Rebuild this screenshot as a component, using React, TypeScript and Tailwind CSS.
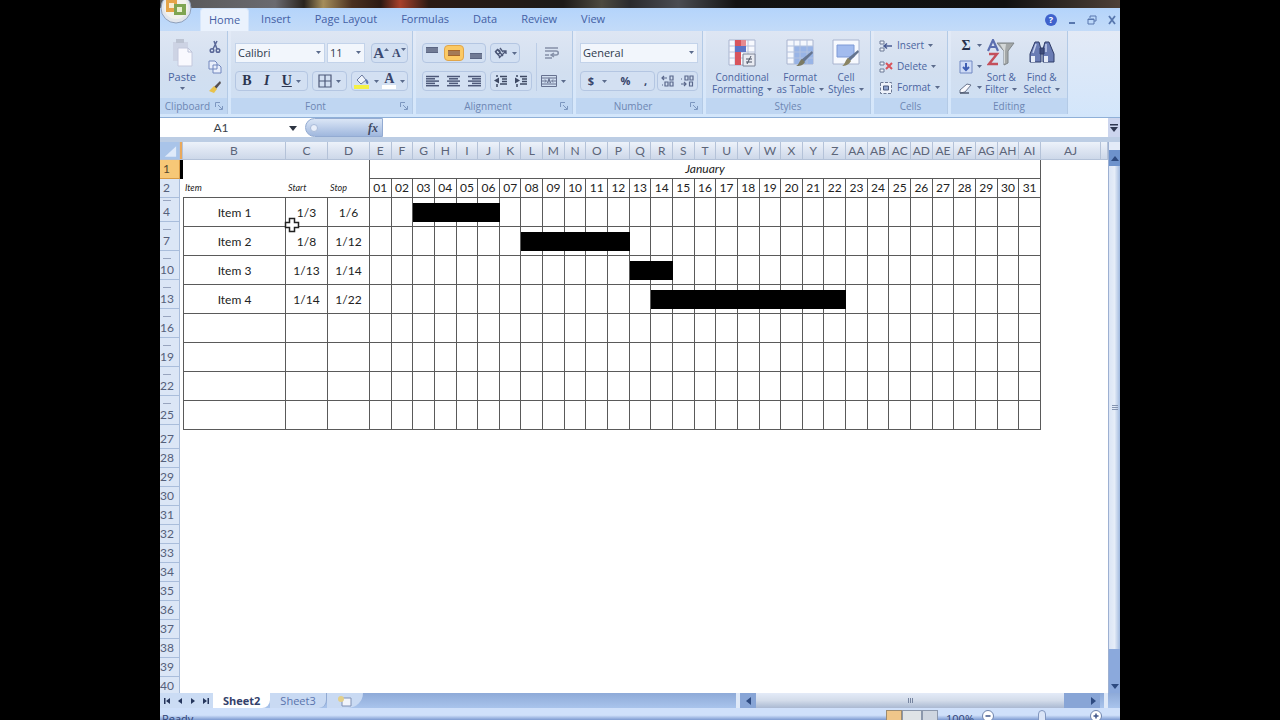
// Spreadsheet window with a ribbon and a January gantt sheet
import React from 'react';

interface Task {
    name: string;
    start: string;
    stop: string;
    from: number;
    to: number;
}

const TASKS: (Task | null)[] = [
    { name: 'Item 1', start: '1/3', stop: '1/6', from: 3, to: 6 },
    { name: 'Item 2', start: '1/8', stop: '1/12', from: 8, to: 12 },
    { name: 'Item 3', start: '1/13', stop: '1/14', from: 13, to: 14 },
    { name: 'Item 4', start: '1/14', stop: '1/22', from: 14, to: 22 },
    null,
    null,
    null,
    null,
];

const DAYS = Array.from({ length: 31 }, (_, i) => i + 1);
const EMPTY_ROWS = Array.from({ length: 14 }, (_, i) => i + 27);
const TABS = ['Insert', 'Page Layout', 'Formulas', 'Data', 'Review', 'View'];

// E..Z, AA..AI
const dayColumn = (day: number) => {
    const n = day + 3;
    return n < 26 ? String.fromCharCode(65 + n) : 'A' + String.fromCharCode(65 + n - 26);
};

const Caret = ({ className = '' }: { className?: string }) => (
    <svg viewBox="0 0 5 3" className={`w-[5px] h-[3px] shrink-0 ${className}`} aria-hidden="true">
        <path d="M0 0h5L2.5 3z" fill="#5b6b8c" />
    </svg>
);

interface GroupProps {
    title: string;
    className: string;
    launcher?: boolean;
    children: React.ReactNode;
}

const Group = ({ title, className, launcher, children }: GroupProps) => (
    <section className={`flex flex-col shrink-0 border-r border-[#b3cae6] bg-gradient-to-b from-[#dee6f3] via-[#d2dff0] to-[#cddff4] ${className}`}>
        <div className="flex-1 flex px-1 pt-3">{children}</div>
        <div className="h-4 flex items-center bg-[#bfd6f2] text-[#6d86b3]">
            <h2 className="flex-1 text-center">{title}</h2>
            {launcher && (
                <button aria-label={`${title} options`} className="pr-1">
                    <svg viewBox="0 0 8 8" className="w-2 h-2" fill="none" stroke="#7d97c0">
                        <path d="M.5 5V.5H5M3 3l4 4M7.500 4v3.500H4" />
                    </svg>
                </button>
            )}
        </div>
    </section>
);

const Strip = ({ children, className = '' }: { children: React.ReactNode; className?: string }) => (
    <div className={`h-5 flex items-center justify-around rounded-sm border border-[#b4c6e2] bg-[#d3e0f2] ${className}`}>
        {children}
    </div>
);

const IconButton = ({ label, children, className = '' }: { label: string; children: React.ReactNode; className?: string }) => (
    <button aria-label={label} className={`h-4 flex items-center justify-center gap-1 ${className}`}>
        {children}
    </button>
);

const Combo = ({ label, value, className }: { label: string; value: string; className: string }) => (
    <div className={`relative h-5 ${className}`}>
        <select aria-label={label} className="w-full h-full appearance-none bg-[#f2f6fc] border border-[#c3d3ea] pl-[2px] text-[11px] leading-4 text-[#2f3a4d]">
            <option>{value}</option>
        </select>
        <Caret className="absolute right-1 top-2" />
    </div>
);

const Lines = ({ rows }: { rows: [number, number][] }) => (
    <svg viewBox="0 0 14 12" className="w-[14px] h-3" stroke="#4d5878" strokeWidth="1.500">
        {rows.map(([x, w], i) => (
            <path key={i} d={`M${x} ${1.5 + i * 2.3}h${w}`} />
        ))}
    </svg>
);

const VAlign = ({ y, fill }: { y: number; fill: string }) => (
    <svg viewBox="0 0 14 14" className="w-[14px] h-[14px]">
        <path d={`M1 ${y}h12v6H1z`} fill={fill} />
        <path d={`M1 ${y + 2}h12M1 ${y + 4}h12`} stroke="#a8b0c4" strokeWidth=".6" />
    </svg>
);

const Indent = ({ flip }: { flip?: boolean }) => (
    <svg viewBox="0 0 14 12" className="w-[14px] h-3" stroke="#3f4963" strokeWidth="1.500" fill="none">
        <path d="M6 1.500h7M8 4h5M8 6.500h5M6 9h7M3 0v2M3 9v3" />
        <path d={flip ? 'M5 2.500L0 5.500l5 3z' : 'M1 2.500l5 3-5 3z'} fill="#3f4963" stroke="none" />
    </svg>
);

const BigButton = ({ lines, className = '', children }: { lines: [string, string]; className?: string; children: React.ReactNode }) => (
    <button className={`flex flex-col items-center shrink-0 whitespace-nowrap leading-3 ${className}`}>
        <span className="h-7 mb-1 -mt-1 flex items-center">{children}</span>
        <span className="h-3">{lines[0]}</span>
        <span className="h-3 flex items-center gap-1">
            {lines[1]}
            <Caret />
        </span>
    </button>
);

const CellsButton = ({ label, children }: { label: string; children: React.ReactNode }) => (
    <button className="h-[21px] flex items-center gap-1 whitespace-nowrap">
        <svg viewBox="0 0 14 14" className="w-[14px] h-[14px] shrink-0">{children}</svg>
        {label}
        <Caret />
    </button>
);

const Ribbon = () => (
    <div className="h-[87px] flex gap-[3px] pb-[3px] overflow-hidden bg-gradient-to-b from-[#e3eaf6] to-[#d3e6fb] border-b border-[#8fb0d8] text-[10px] text-[#4a64a0]">
        <Group title="Clipboard" launcher className="w-[68px]">
            <button className="w-9 flex flex-col items-center text-[11px] leading-3">
                <svg viewBox="0 0 24 28" className="w-7 h-7 -mt-1 mb-1">
                    <path d="M3 3h15v19H3z" fill="#cdd3e4" />
                    <path d="M6 0h8v4H6z" fill="#bcc3d2" />
                    <path d="M8 9h10l4 4v14H8z" fill="#f9f9fe" stroke="#c3c8dd" />
                    <path d="M18 9v4h4" fill="none" stroke="#b9c0d6" />
                </svg>
                Paste
                <Caret className="mt-1" />
            </button>
            <div className="flex flex-col gap-1 pl-2 -mt-1">
                <IconButton label="Cut">
                    <svg viewBox="0 0 14 14" className="w-[14px] h-[14px]" fill="none" stroke="#5a6898" strokeWidth="1.500">
                        <path d="M6 1l3 8M9 1L5 9" />
                        <circle cx="4" cy="10.500" r="1.800" />
                        <circle cx="10" cy="10.500" r="1.800" />
                    </svg>
                </IconButton>
                <IconButton label="Copy">
                    <svg viewBox="0 0 14 14" className="w-[14px] h-[14px]" fill="#e8eefb" stroke="#7186bd">
                        <path d="M1 1h6l2 2v6H1zM5 5h6l2 2v6H5z" />
                    </svg>
                </IconButton>
                <IconButton label="Format Painter">
                    <svg viewBox="0 0 14 14" className="w-[14px] h-[14px]">
                        <path d="M12 1l1 2-5 6-2-2z" fill="#544f52" />
                        <path d="M6 6l3 3-3 4-5-2z" fill="#e8c24c" />
                    </svg>
                </IconButton>
            </div>
        </Group>

        <Group title="Font" launcher className="w-[182px]">
            <div className="flex-1 flex flex-col gap-2">
                <div className="flex gap-[2px]">
                    <Combo label="Font" value="Calibri" className="w-[90px]" />
                    <Combo label="Font size" value="11" className="w-[38px]" />
                    <Strip className="ml-1 flex-1 font-['Liberation_Serif',serif] font-bold text-[#3b4970]">
                        <IconButton label="Grow font"><span className="text-[15px] leading-4">A</span><Caret className="rotate-180 -mt-2 -ml-1" /></IconButton>
                        <IconButton label="Shrink font"><span className="text-xs leading-4">A</span><Caret className="-mt-2 -ml-1" /></IconButton>
                    </Strip>
                </div>
                <div className="flex gap-1">
                    <Strip className="w-[73px] font-['Liberation_Serif',serif] text-sm leading-4 text-[#2c3550]">
                        <IconButton label="Bold" className="font-bold">B</IconButton>
                        <IconButton label="Italic" className="font-bold italic">I</IconButton>
                        <IconButton label="Underline" className="font-bold"><span className="underline">U</span><Caret /></IconButton>
                    </Strip>
                    <Strip className="w-[35px]">
                        <IconButton label="Borders">
                            <svg viewBox="0 0 14 14" className="w-[14px] h-[14px]" fill="none" stroke="#4d5878" strokeWidth="1.200">
                                <path d="M1 1h12v12H1zM7 1v12M1 7h12" />
                            </svg>
                            <Caret />
                        </IconButton>
                    </Strip>
                    <Strip className="flex-1">
                        <IconButton label="Fill color">
                            <svg viewBox="0 0 16 16" className="w-4 h-4">
                                <path d="M3 7l5-5 4 5-5 4z" fill="#eef3fb" stroke="#6c7ba0" />
                                <path d="M12 6c2 1 3 3 2 5-2 0-3-2-2-5z" fill="#5e78b4" />
                                <path d="M0 12h15v4H0z" fill="#f3f046" />
                            </svg>
                            <Caret />
                        </IconButton>
                        <IconButton label="Font color" className="font-['Liberation_Serif',serif] font-bold text-sm text-[#39456b]">
                            <span className="h-4 w-[14px] leading-3 border-b-4 border-white">A</span>
                            <Caret />
                        </IconButton>
                    </Strip>
                </div>
            </div>
        </Group>

        <Group title="Alignment" launcher className="w-[157px]">
            <div className="flex flex-col gap-2 pl-[2px]">
                <div className="flex gap-1">
                    <Strip className="w-16">
                        <IconButton label="Top align"><VAlign y={1} fill="#5a6582" /></IconButton>
                        <IconButton label="Middle align" className="w-5 rounded-sm bg-[#fbc964] border border-[#e0a54a]"><VAlign y={4} fill="#a3642a" /></IconButton>
                        <IconButton label="Bottom align"><VAlign y={7} fill="#5a6582" /></IconButton>
                    </Strip>
                    <Strip className="w-[30px]">
                        <IconButton label="Orientation">
                            <svg viewBox="0 0 14 14" className="w-[14px] h-[14px]" fill="none" stroke="#4d5878" strokeWidth="1.300">
                                <path d="M1 5l5 6M3 3l6 7M6 2l3 4M5 12l7-7M9 5h3v3" />
                                <circle cx="4" cy="6" r="2" />
                            </svg>
                            <Caret />
                        </IconButton>
                    </Strip>
                </div>
                <div className="flex gap-1">
                    <Strip className="w-16">
                        <IconButton label="Align left"><Lines rows={[[0, 13], [0, 9], [0, 13], [0, 9], [0, 13]]} /></IconButton>
                        <IconButton label="Center"><Lines rows={[[0, 13], [2, 9], [0, 13], [2, 9], [0, 13]]} /></IconButton>
                        <IconButton label="Align right"><Lines rows={[[0, 13], [4, 9], [0, 13], [4, 9], [0, 13]]} /></IconButton>
                    </Strip>
                    <Strip className="w-[42px]">
                        <IconButton label="Decrease indent"><Indent flip /></IconButton>
                        <IconButton label="Increase indent"><Indent /></IconButton>
                    </Strip>
                </div>
            </div>
            <div className="flex flex-col gap-2 pl-1 ml-1 h-12 border-l border-[#bccde6]">
                <IconButton label="Wrap text" className="h-5 w-5">
                    <svg viewBox="0 0 16 14" className="w-4 h-[14px]" fill="none" stroke="#8590a8" strokeWidth="1.500">
                        <path d="M2 2h13M2 5h11c3 0 3 4 0 4H9M2 9h4M2 12h7M11 7L8 9l3 2" />
                    </svg>
                </IconButton>
                <IconButton label="Merge and center" className="h-5">
                    <svg viewBox="0 0 16 14" className="w-4 h-[14px]" fill="none" stroke="#66718f">
                        <path d="M.5 1.500h15v11H.5zM.5 4h15M.5 10h15M1 7h4M11 7h4M4 5.500L5.500 7 4 8.500M12 5.500L10.500 7 12 8.500" />
                        <path d="M6.500 9L8 5l1.500 4" strokeWidth="1.300" />
                    </svg>
                    <Caret />
                </IconButton>
            </div>
        </Group>

        <Group title="Number" launcher className="w-[127px]">
            <div className="flex-1 flex flex-col gap-2">
                <Combo label="Number format" value="General" className="w-[118px]" />
                <div className="flex gap-[2px] w-[118px]">
                    <Strip className="w-[75px] text-[11px] font-bold text-[#39456b]">
                        <IconButton label="Currency"><span>$</span><Caret className="ml-1" /></IconButton>
                        <IconButton label="Percent">%</IconButton>
                        <IconButton label="Comma">,</IconButton>
                    </Strip>
                    <Strip className="flex-1">
                        <IconButton label="Increase decimal">
                            <svg viewBox="0 0 14 12" className="w-[14px] h-3" fill="none" stroke="#59668a" strokeWidth="1.200">
                                <path d="M1 3h5M3 1L1 3l2 2M9 1h3v4H9zM4 7h3v4H4zM9 7h3v4H9zM1 10h1" />
                            </svg>
                        </IconButton>
                        <IconButton label="Decrease decimal">
                            <svg viewBox="0 0 14 12" className="w-[14px] h-3" fill="none" stroke="#59668a" strokeWidth="1.200">
                                <path d="M5 1h3v4H5zM10 1h3v4h-3zM1 9h5M4 7l2 2-2 2M9.500 7h3v4h-3zM1 4h1" />
                            </svg>
                        </IconButton>
                    </Strip>
                </div>
            </div>
        </Group>

        <Group title="Styles" className="w-[165px]">
            <div className="flex-1 flex justify-between px-[2px]">
                <BigButton lines={['Conditional', 'Formatting']}>
                    <svg viewBox="0 0 28 28" className="w-7 h-7">
                        <path d="M1 1h26v25H1z" fill="#f7f9fe" stroke="#a9b4cf" />
                        <path d="M1 7h26M1 13h26M1 19h26M7 1v25M20 1v25" stroke="#b8c2da" />
                        <path d="M7 1h6v6H7zM7 13h6v13H7z" fill="#d8545c" />
                        <path d="M7 7h11v6H7z" fill="#5c74c6" />
                        <path d="M13 1h5v6h-5z" fill="#e58a90" />
                        <path d="M15 15h12v12H15z" fill="#e9ebf2" stroke="#7b8296" />
                        <path d="M18 20h6M18 23h6M23 17l-4 8" stroke="#4b5264" />
                    </svg>
                </BigButton>
                <BigButton lines={['Format', 'as Table']}>
                    <svg viewBox="0 0 28 28" className="w-7 h-7">
                        <path d="M1 1h26v24H1z" fill="#f4f7fd" stroke="#a9b4cf" />
                        <path d="M8 7h19v18H8z" fill="#98b4e6" />
                        <path d="M1 7h26M1 13h26M1 19h26M8 1v24M14 1v24M21 1v24" stroke="#b3c2de" />
                        <path d="M26 12l1 2-9 9-3-2z" fill="#64748f" />
                        <path d="M16 20l3 3c-2 4-6 4-9 4 3-1 3-5 6-7z" fill="#7b7a63" />
                    </svg>
                </BigButton>
                <BigButton lines={['Cell', 'Styles']}>
                    <svg viewBox="0 0 28 28" className="w-7 h-7">
                        <path d="M1 1h26v24H1z" fill="#f7f9fe" stroke="#a9b4cf" />
                        <path d="M5 6h17v12H5z" fill="#a2bbee" stroke="#7f9ad6" />
                        <path d="M26 11l1 2-9 9-3-2z" fill="#64748f" />
                        <path d="M16 19l3 3c-2 4-6 5-9 5 3-1 3-6 6-8z" fill="#8a8462" />
                    </svg>
                </BigButton>
            </div>
        </Group>

        <Group title="Cells" className="w-[74px]">
            <div className="flex flex-col pl-[1px] -mt-2">
                <CellsButton label="Insert">
                    <path d="M1 2h4v3H1zM1 9h4v3H1z" fill="#eef2fa" stroke="#6d7a96" />
                    <path d="M5 7h8M8 4.500L5 7l3 2.500" fill="none" stroke="#4a5c92" strokeWidth="1.500" />
                </CellsButton>
                <CellsButton label="Delete">
                    <path d="M1 2h4v3H1zM1 9h4v3H1z" fill="#eef2fa" stroke="#6d7a96" />
                    <path d="M7 3l6 6M13 3L7 9" stroke="#d9535b" strokeWidth="2" />
                </CellsButton>
                <CellsButton label="Format">
                    <path d="M1.500 1.500h11v11h-11z" fill="#eef2fa" stroke="#6d7a96" strokeDasharray="3 1.500" />
                    <path d="M4.500 5h5v4h-5z" fill="#8ea3cf" stroke="#4b597c" />
                </CellsButton>
            </div>
        </Group>

        <Group title="Editing" className="w-[117px]">
            <div className="flex flex-col pl-1 -mt-2">
                <IconButton label="Sum" className="h-[21px]"><span className="w-[14px] font-['Liberation_Serif',serif] font-bold text-sm text-[#26304a]">Σ</span><Caret /></IconButton>
                <IconButton label="Fill" className="h-[21px]">
                    <svg viewBox="0 0 14 14" className="w-[14px] h-[14px]">
                        <path d="M1 1h12v12H1z" fill="#cfdcf6" stroke="#7088c2" />
                        <path d="M7 3v7M4 7l3 3 3-3" fill="none" stroke="#3f5fb4" strokeWidth="2" />
                    </svg>
                    <Caret />
                </IconButton>
                <IconButton label="Clear" className="h-[21px]">
                    <svg viewBox="0 0 14 14" className="w-[14px] h-[14px]">
                        <path d="M1 9l7-6 4 1-6 7-5 1z" fill="#f9f9fd" stroke="#69748c" />
                        <path d="M1 12h9" stroke="#4f5a70" strokeWidth="1.500" />
                    </svg>
                    <Caret />
                </IconButton>
            </div>
            <div className="flex-1 flex justify-around">
                <BigButton lines={['Sort &', 'Filter']}>
                    <svg viewBox="0 0 28 28" className="w-7 h-7">
                        <path d="M1 12L6 1l5 11M3 8h6" fill="none" stroke="#5b6fb0" strokeWidth="2.200" />
                        <path d="M2 15h8L2 25h9" fill="none" stroke="#c4505c" strokeWidth="2.400" />
                        <path d="M10 4h17l-6 8v12l-4 2V12z" fill="#a4a8a8" stroke="#7f8588" />
                        <path d="M13 5h6l-1 7v12l-1 1V12z" fill="#d4d8d8" />
                    </svg>
                </BigButton>
                <BigButton lines={['Find &', 'Select']}>
                    <svg viewBox="0 0 28 28" className="w-7 h-7" stroke="#2f3c68">
                        <path d="M7 3h4l2 7v13H2V15z" fill="#6a7cb4" />
                        <path d="M17 3h4l5 12v8H15V10z" fill="#6a7cb4" />
                        <path d="M3 17h4v6H3zM16 17h4v6h-4z" fill="#e6ecf8" stroke="none" />
                        <path d="M12 9h4v6h-4z" fill="#3f4d7c" />
                        <path d="M8 5l-3 9M18 5v8" stroke="#c5d0ee" strokeWidth="1.500" />
                    </svg>
                </BigButton>
            </div>
        </Group>
    </div>
);

const TabBar = () => (
    <nav className="relative h-[23px] flex pl-10 bg-gradient-to-b from-[#b4d4fb] to-[#c3dbf8] text-[11px] text-[#4460a4]">
        <button className="px-2 bg-[#eaf2fd] border-x border-t border-[#d6e6fb] rounded-t-sm">Home</button>
        {TABS.map((tab) => (
            <button key={tab} className="px-3">{tab}</button>
        ))}
        <div className="ml-auto flex items-center gap-[10px] pr-[3px]">
            <button aria-label="Help" className="w-3 h-3 rounded-full bg-[#3f62cc] text-white text-[9px] leading-3 font-bold">?</button>
            <button aria-label="Minimize">
                <svg viewBox="0 0 10 10" className="w-[10px] h-[10px]" stroke="#5877ae" strokeWidth="2"><path d="M2 8h6" /></svg>
            </button>
            <button aria-label="Restore">
                <svg viewBox="0 0 10 10" className="w-[10px] h-[10px]" fill="none" stroke="#5877ae"><path d="M3 3V1h6v5H7M1 4h6v5H1zM1 4.500h6" /></svg>
            </button>
            <button aria-label="Close">
                <svg viewBox="0 0 10 10" className="w-[10px] h-[10px]" stroke="#5877ae" strokeWidth="1.800"><path d="M2 1l6 8M8 1L2 9" /></svg>
            </button>
        </div>
        <button aria-label="Office menu" className="absolute left-0 -top-4">
            <svg viewBox="0 0 32 32" className="w-8 h-8">
                <circle cx="16" cy="16" r="15" fill="#e2e6ec" stroke="#8e9fba" />
                <circle cx="16" cy="15" r="12" fill="#f2f1ec" />
                <path d="M6 8h11v12H6z" fill="#e5a448" />
                <path d="M9 11h5v5H9z" fill="#f8ecd0" />
                <path d="M14 12h12v11H14z" fill="#7fa552" />
                <path d="M17 15h5v5h-5z" fill="#e8efcf" />
            </svg>
        </button>
    </nav>
);

const FormulaBar = () => (
    <div className="h-6 flex pb-[5px] bg-[#bccde4] text-xs font-[Lato,sans-serif]">
        <div className="relative w-[145px] shrink-0 bg-white">
            <input aria-label="Name box" defaultValue="A1" className="w-[122px] h-full text-center text-[#3a3f4a] outline-none" />
            <svg viewBox="0 0 8 5" className="absolute right-2 top-2 w-2 h-[5px]"><path d="M0 0h8L4 5z" fill="#2d3442" /></svg>
        </div>
        <div className="bg-white shrink-0">
            <div className="h-full w-[78px] flex items-center justify-between px-1 rounded-l-full border border-[#93abd2] bg-gradient-to-b from-[#dbe6f6] to-[#9fb7dd]">
                <span className="w-2 h-2 rounded-full border border-[#a9bbd9] bg-[#e9effa]" />
                <button aria-label="Insert function" className="font-['Liberation_Serif',serif] italic font-bold leading-4 text-[#3e4963]">fx</button>
            </div>
        </div>
        <input aria-label="Formula" className="flex-1 min-w-0 bg-white outline-none" />
        <button aria-label="Expand formula bar" className="w-3 flex items-center justify-center bg-[#ccd5ee]">
            <svg viewBox="0 0 8 10" className="w-2 h-[10px]" fill="#2f3850"><path d="M0 1h8v1.500H0zM0 4h8L4 9z" /></svg>
        </button>
    </div>
);

const rowHead = 'border-r border-b border-[#a9bddb] bg-[#dbe6f6] font-normal text-[#55607a]';
const line = 'border-[#5a5a5a]';

const TaskRows = ({ task, index }: { task: Task | null; index: number }) => {
    const first = 3 + index * 3;
    return (
        <>
            {[0, 1, 2].map((part) => {
                const middle = part === 1;
                const edge = part === 2 ? 'border-b' : '';
                return (
                    <tr key={part} className={middle ? 'h-[19px]' : 'h-[5px]'}>
                        <th scope="row" className={`${rowHead} ${middle ? '' : 'border-b-0'}`}>
                            {middle ? <span className="pr-[6px]">{first + 1}</span> : part === 0 && <div className="w-2 h-px ml-[3px] bg-[#98a5bf]" />}
                        </th>
                        <td />
                        <td className={`border-x ${edge} ${line}`}>{middle && task?.name}</td>
                        <td className={`border-r ${edge} ${line}`}>{middle && task?.start}</td>
                        <td className={`border-r ${edge} ${line}`}>{middle && task?.stop}</td>
                        {DAYS.map((day) => {
                            const filled = middle && task && day >= task.from && day <= task.to;
                            return <td key={day} className={`border-r ${edge} ${filled ? 'bg-black border-black' : line}`} />;
                        })}
                        <td />
                        <td />
                    </tr>
                );
            })}
        </>
    );
};

const Sheet = () => (
    <div className="relative flex-1 min-w-0 overflow-hidden bg-white">
        <table className="w-full table-fixed border-separate border-spacing-0 font-[Lato,sans-serif] text-xs leading-[14px] text-[#222] text-center [&_td]:p-0 [&_th]:p-0">
            <colgroup>
                <col className="w-5" />
                <col className="w-[3px]" />
                <col className="w-[103px]" />
                <col className="w-[42px]" />
                <col className="w-[42px]" />
                {DAYS.map((day) => <col key={day} />)}
                <col className="w-[60px]" />
                <col className="w-[7px]" />
            </colgroup>
            <thead>
                <tr className="h-[18px] bg-gradient-to-b from-[#edf2fa] to-[#cbd6e8] text-[#5c6579] [&>*]:border-b [&>*]:border-r [&>*]:border-[#b4c2d8] [&>*]:font-normal">
                    <th className="bg-[#a9c4e9]">
                        <svg viewBox="0 0 20 17" className="w-full h-[17px]"><path d="M17 4v11H5z" fill="#dfeafa" /></svg>
                    </th>
                    <th className="bg-[#e9a95c]" />
                    <th>B</th>
                    <th>C</th>
                    <th>D</th>
                    {DAYS.map((day) => <th key={day}>{dayColumn(day)}</th>)}
                    <th>AJ</th>
                    <th />
                </tr>
            </thead>
            <tbody>
                <tr className="h-[19px]">
                    <th scope="row" className="bg-[#f7c877] border-b border-r border-[#d99b45] font-normal text-[#55482f]"><span className="pr-[6px]">1</span></th>
                    <td className="border-2 border-black" />
                    <td />
                    <td />
                    <td className={`border-r ${line}`} />
                    <td colSpan={31} className={`border-b border-r italic ${line}`}>January</td>
                    <td />
                    <td />
                </tr>
                <tr className="h-[19px]">
                    <th scope="row" className={rowHead}><span className="pr-[6px]">2</span></th>
                    <td />
                    <td className={`border-b text-left italic text-[9px] ${line}`}><span className="pl-[2px]">Item</span></td>
                    <td className={`border-b text-left italic text-[9px] ${line}`}><span className="pl-[2px]">Start</span></td>
                    <td className={`border-b border-r text-left italic text-[9px] ${line}`}><span className="pl-[2px]">Stop</span></td>
                    {DAYS.map((day) => (
                        <td key={day} className={`border-b border-r ${line}`}>{String(day).padStart(2, '0')}</td>
                    ))}
                    <td />
                    <td />
                </tr>
                {TASKS.map((task, i) => <TaskRows key={i} task={task} index={i} />)}
                {EMPTY_ROWS.map((n) => (
                    <tr key={n} className="h-[19px]">
                        <th scope="row" className={rowHead}><span className="pr-[6px]">{n}</span></th>
                        <td colSpan={37} />
                    </tr>
                ))}
            </tbody>
        </table>

        {/* Mouse cursor */}
        <svg viewBox="0 0 16 16" className="absolute left-[124px] top-[75px] w-4 h-4" aria-hidden="true">
            <path d="M5.500 1.500h5v4h4v5h-4v4h-5v-4h-4v-5h4z" fill="#fff" stroke="#222" strokeWidth="1.500" />
        </svg>
    </div>
);

const VerticalScroll = () => (
    <div className="w-3 shrink-0 flex flex-col bg-[#8ba9dc] border-l border-[#9db0d2]">
        <div className="h-2 bg-[#e3ebf8]" />
        <button aria-label="Scroll up" className="h-4 flex items-center justify-center bg-[#6d92cc]">
            <svg viewBox="0 0 8 5" className="w-2 h-[5px]"><path d="M4 0l4 5H0z" fill="#2d4a80" /></svg>
        </button>
        <div className="flex-1 flex flex-col items-center justify-center gap-px bg-gradient-to-r from-[#dbe5f5] via-[#e6edf8] to-[#9fb8de]">
            <span className="w-[6px] h-px bg-[#8594b0]" />
            <span className="w-[6px] h-px bg-[#8594b0]" />
            <span className="w-[6px] h-px bg-[#8594b0]" />
        </div>
        <button aria-label="Scroll down" className="h-11 flex items-end justify-center pb-1">
            <svg viewBox="0 0 8 5" className="w-2 h-[5px]"><path d="M0 0h8L4 5z" fill="#2d4a80" /></svg>
        </button>
    </div>
);

const NAV = [
    { label: 'First sheet', d: 'M1 1h1.500v6H1zM7 1v6L3 4z' },
    { label: 'Previous sheet', d: 'M6 1v6L2 4z' },
    { label: 'Next sheet', d: 'M2 1v6l4-3z' },
    { label: 'Last sheet', d: 'M1 1v6l4-3zM5.500 1H7v6H5.500z' },
];

const SheetTabs = () => (
    <div className="h-[15px] flex bg-gradient-to-b from-[#8eaad8] to-[#a9c4ec] text-[11px] leading-[14px]">
        <div className="w-[53px] flex items-center justify-around bg-[#cbdcf4]">
            {NAV.map((item) => (
                <button key={item.label} aria-label={item.label}>
                    <svg viewBox="0 0 8 8" className="w-2 h-2"><path d={item.d} fill="#26365c" /></svg>
                </button>
            ))}
        </div>
        <button className="px-[10px] bg-white font-bold text-[#33416b] rounded-br-lg">Sheet2</button>
        <button className="px-[10px] bg-[#c9daf3] text-[#5873ad] border-r border-[#90a9d2] rounded-br-lg">Sheet3</button>
        <button aria-label="Insert sheet" className="w-9 flex items-center justify-center bg-[#c9daf3] rounded-br-2xl">
            <svg viewBox="0 0 16 12" className="w-4 h-3">
                <path d="M5 3h9v8H5z" fill="#f1f4fb" stroke="#7f90b4" />
                <circle cx="4" cy="4" r="3" fill="#e2cf8a" />
            </svg>
        </button>
        <div className="ml-auto w-2/5 flex">
            <span className="w-1 bg-[#dfe9f8]" />
            <button aria-label="Scroll left" className="w-4 flex items-center justify-center bg-[#88a5d6]">
                <svg viewBox="0 0 5 8" className="w-[5px] h-2"><path d="M5 0v8L0 4z" fill="#2d4a80" /></svg>
            </button>
            <div className="flex-1 flex items-center justify-center gap-px bg-gradient-to-b from-[#e4ebf8] via-[#d3dcea] to-[#aab9d2]">
                <span className="w-px h-[5px] bg-[#76849f]" />
                <span className="w-px h-[5px] bg-[#76849f]" />
                <span className="w-px h-[5px] bg-[#76849f]" />
            </div>
            <button aria-label="Scroll right" className="w-9 flex items-center justify-end pr-1 bg-[#88a5d6]">
                <svg viewBox="0 0 5 8" className="w-[5px] h-2"><path d="M0 0v8l5-4z" fill="#2d4a80" /></svg>
            </button>
            <span className="w-1 ml-1 mr-3 bg-[#dfe9f8]" />
        </div>
    </div>
);

const StatusBar = () => (
    <footer className="h-3 shrink-0 overflow-hidden flex items-start justify-between pr-[18px] pt-[2px] bg-gradient-to-b from-[#cfe0fa] from-60% to-[#7d9ad0] text-[11px] leading-[14px] text-[#2f4376]">
        <span className="pl-[2px] pt-[2px]">Ready</span>
        <div className="flex items-start gap-2">
            <div className="flex">
                <button aria-label="Normal view" className="w-4 h-4 border border-[#9c8b70] bg-[#efc68a]" />
                <button aria-label="Page layout view" className="w-5 h-4 border border-[#8c98ac] bg-[#dfe3e6]" />
                <button aria-label="Page break view" className="w-4 h-4 border border-[#8c98ac] bg-[#cfd6e0]" />
            </div>
            <span className="pt-[2px]">100%</span>
            <button aria-label="Zoom out" className="w-3 h-3 rounded-full border border-[#6f84ad] bg-white">
                <svg viewBox="0 0 10 10" className="w-full h-full" stroke="#3f5488" strokeWidth="1.500"><path d="M2.500 5h5" /></svg>
            </button>
            <span className="w-2 h-3 mx-9 rounded-t-full border border-[#8196bf] bg-[#dbe5f7]" />
            <button aria-label="Zoom in" className="w-3 h-3 rounded-full border border-[#6f84ad] bg-white">
                <svg viewBox="0 0 10 10" className="w-full h-full" stroke="#3f5488" strokeWidth="1.500"><path d="M2.500 5h5M5 2.500v5" /></svg>
            </button>
        </div>
    </footer>
);

const App: React.FC = () => {
    return (
        <div className="h-screen overflow-hidden bg-black">
            <div className="w-3/4 h-full mx-auto flex flex-col font-['Open_Sans',sans-serif]">
                <div className="h-2 shrink-0 bg-[linear-gradient(90deg,#555_0%,#6a6a70_12%,#2a241e_15%,#a58e5c_17%,#4a3020_20%,#2c1a14_23%,#a8412c_25%,#2a1a14_28%,#1d1a18_42%,#4d4a40_46%,#2a2a2e_49%,#4a4c52_54%,#131313_60%,#111_88%,#4d4038_100%)]" />
                <TabBar />
                <Ribbon />
                <FormulaBar />
                <div className="flex-1 min-h-0 flex">
                    <Sheet />
                    <VerticalScroll />
                </div>
                <SheetTabs />
                <StatusBar />
            </div>
        </div>
    );
};

export default App;
